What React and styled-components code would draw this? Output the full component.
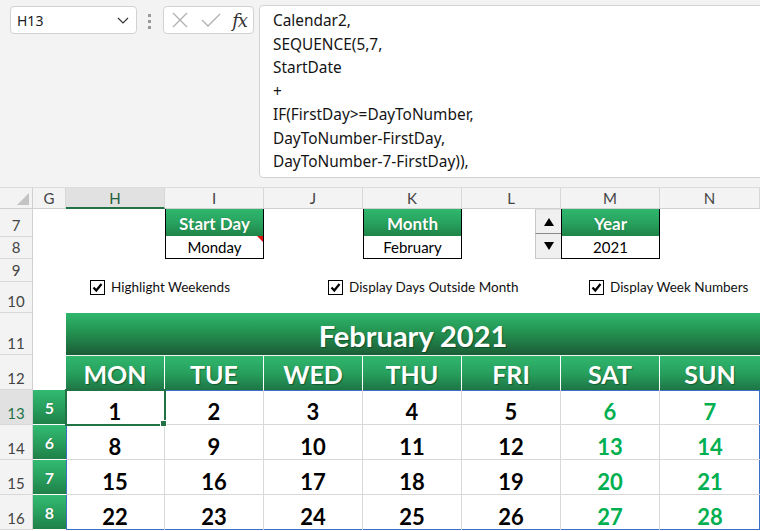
import styled, { createGlobalStyle } from 'styled-components'

const GlobalStyle = createGlobalStyle`
  html, body {
    margin: 0;
    padding: 0;
    background: #fff;
  }
  body {
    font-family: Lato, "Liberation Sans", sans-serif;
    overflow: hidden;
  }
`

const COLS = ['G', 'H', 'I', 'J', 'K', 'L', 'M', 'N']
const ROWS = [7, 8, 9, 10, 11, 12, 13, 14, 15, 16]
const DAYS = ['MON', 'TUE', 'WED', 'THU', 'FRI', 'SAT', 'SUN']
const WEEKS = [5, 6, 7, 8]
const FORMULA = [
  'Calendar2,',
  'SEQUENCE(5,7,',
  'StartDate',
  '+',
  'IF(FirstDay>=DayToNumber,',
  'DayToNumber-FirstDay,',
  'DayToNumber-7-FirstDay)),',
]

const App = () => {
  return (
    <>
      <GlobalStyle />
      <Bar>
        <NameBox>
          H13
          <svg width='14' height='14' viewBox='0 0 14 14'>
            <path d='M2 5 L7 10 L12 5' fill='none' stroke='#333' strokeWidth='1.2' />
          </svg>
        </NameBox>
        <Dots>
          <Dot />
          <Dot />
          <Dot />
        </Dots>
        <FuncBox>
          <svg width='18' height='18' viewBox='0 0 18 18'>
            <path d='M2 2 L16 16 M16 2 L2 16' stroke='#b0b0b0' strokeWidth='1.3' />
          </svg>
          <svg width='20' height='18' viewBox='0 0 20 18'>
            <path d='M1 9 L7 15 L19 3' fill='none' stroke='#b0b0b0' strokeWidth='1.3' />
          </svg>
          <Fx>fx</Fx>
        </FuncBox>
        <Formula>
          {FORMULA.map((line) => (
            <FormulaLine key={line}>{line}</FormulaLine>
          ))}
        </Formula>
      </Bar>

      <Sheet>
        <Corner>
          <svg width='12' height='12' viewBox='0 0 12 12'>
            <polygon points='12,0 12,12 0,12' fill='#c4c4c4' />
          </svg>
        </Corner>
        {COLS.map((c) => (
          <ColHeader key={c} $selected={c === 'H'}>
            {c}
          </ColHeader>
        ))}
        {ROWS.map((r, i) => (
          <RowHeader key={r} $row={i + 2} $selected={r === 13}>
            {r}
          </RowHeader>
        ))}

        <Control $col={4}>
          <ControlHead>Start Day</ControlHead>
          <ControlValue $note>Monday</ControlValue>
        </Control>
        <Control $col={6}>
          <ControlHead>Month</ControlHead>
          <ControlValue>February</ControlValue>
        </Control>
        <Spinner>
          <SpinButton>
            <svg width='10' height='8' viewBox='0 0 10 8'>
              <polygon points='5,0 10,8 0,8' fill='#000' />
            </svg>
          </SpinButton>
          <SpinButton $down>
            <svg width='10' height='8' viewBox='0 0 10 8'>
              <polygon points='0,0 10,0 5,8' fill='#000' />
            </svg>
          </SpinButton>
        </Spinner>
        <Control $col={8}>
          <ControlHead>Year</ControlHead>
          <ControlValue>2021</ControlValue>
        </Control>

        <CheckItem $col={3} $offset={24}>
          <CheckBox>
            <CheckMark />
          </CheckBox>
          Highlight Weekends
        </CheckItem>
        <CheckItem $col={5} $offset={64}>
          <CheckBox>
            <CheckMark />
          </CheckBox>
          Display Days Outside Month
        </CheckItem>
        <CheckItem $col={8} $offset={28}>
          <CheckBox>
            <CheckMark />
          </CheckBox>
          Display Week Numbers
        </CheckItem>

        <Title>February 2021</Title>
        {DAYS.map((d, i) => (
          <DayHeader key={d} $col={i + 3} $last={i === 6}>
            {d}
          </DayHeader>
        ))}
        {WEEKS.map((w, i) => (
          <WeekCell key={w} $row={i + 8}>
            {w}
          </WeekCell>
        ))}
        <DateGrid>
          {WEEKS.map((w, wi) =>
            DAYS.map((d, di) => (
              <DateCell
                key={`${w}-${d}`}
                $weekend={di >= 5}
                $lastCol={di === 6}
                $lastRow={wi === 3}
                $selected={wi === 0 && di === 0}
              >
                {1 + wi * 7 + di}
              </DateCell>
            ))
          )}
        </DateGrid>
      </Sheet>
    </>
  )
}

const CheckMark = () => (
  <svg width='11' height='11' viewBox='0 0 11 11'>
    <path d='M1.5 5.5 L4.3 8.5 L9.5 2' fill='none' stroke='#000' strokeWidth='2.2' />
  </svg>
)

/* formula bar */

const Bar = styled.div`
  height: 187px;
  box-sizing: border-box;
  background: #f3f3f3;
  display: flex;
  align-items: flex-start;
  padding: 5px 0 0 10px;
  font-family: "Noto Sans", "Open Sans", sans-serif;
`

const NameBox = styled.div`
  margin-top: 1px;
  width: 127px;
  height: 28px;
  box-sizing: border-box;
  border: 1px solid #d2d2d2;
  border-radius: 4px;
  background: #fff;
  display: flex;
  align-items: center;
  justify-content: space-between;
  padding: 0 6px;
  font-size: 14px;
  color: #1e1e1e;
`

const Dots = styled.div`
  width: 4px;
  margin: 9px 11px 0;
  display: flex;
  flex-direction: column;
  gap: 3px;
`

const Dot = styled.span`
  width: 3px;
  height: 3px;
  background: #9a9a9a;
`

const FuncBox = styled.div`
  margin-top: 1px;
  width: 91px;
  height: 28px;
  box-sizing: border-box;
  border: 1px solid #d2d2d2;
  border-radius: 4px;
  background: #fff;
  display: flex;
  align-items: center;
  justify-content: space-between;
  padding: 0 6px 0 7px;
`

const Fx = styled.span`
  font-family: "DejaVu Serif", "Liberation Serif", serif;
  font-style: italic;
  font-size: 18px;
  color: #333;
  letter-spacing: -1px;
`

const Formula = styled.div`
  margin-left: 5px;
  flex: 1;
  margin-right: -4px;
  height: 173px;
  box-sizing: border-box;
  border: 1px solid #d2d2d2;
  border-radius: 4px;
  background: #fff;
  padding: 3px 13px;
  font-size: 15.4px;
  line-height: 23.5px;
  color: #141414;
`

const FormulaLine = styled.div`
  white-space: nowrap;
`

/* sheet */

const Sheet = styled.div`
  display: grid;
  grid-template-columns: 33px 33px repeat(6, 99px) 100px;
  grid-template-rows: 22px 28px 22px 23px 31px 42px 35px repeat(4, 35px);
  background: #fff;
`

const Corner = styled.div`
  grid-column: 1;
  grid-row: 1;
  background: #f3f3f3;
  border-right: 1px solid #d0d0d0;
  border-bottom: 1px solid #d0d0d0;
  border-top: 1px solid #dcdcdc;
  display: flex;
  align-items: flex-end;
  justify-content: flex-end;
  padding: 0 3px 3px 0;
`

const ColHeader = styled.div`
  grid-row: 1;
  background: ${(p) => (p.$selected ? '#e1e1e1' : '#f3f3f3')};
  border-top: 1px solid #dcdcdc;
  border-right: 1px solid #d8d8d8;
  border-bottom: ${(p) => (p.$selected ? '2px solid #217346' : '1px solid #d0d0d0')};
  color: ${(p) => (p.$selected ? '#1f5e3a' : '#444')};
  font-size: 15px;
  display: flex;
  align-items: center;
  justify-content: center;
`

const RowHeader = styled.div`
  grid-column: 1;
  grid-row: ${(p) => p.$row};
  background: ${(p) => (p.$selected ? '#e1e1e1' : '#f3f3f3')};
  border-right: 1px solid #d0d0d0;
  border-bottom: 1px solid #d8d8d8;
  color: ${(p) => (p.$selected ? '#217346' : '#444')};
  font-size: 15px;
  display: flex;
  align-items: flex-end;
  justify-content: center;
  padding-bottom: 2px;
  box-sizing: border-box;
`

const Control = styled.div`
  grid-column: ${(p) => p.$col};
  grid-row: 2 / span 2;
  display: grid;
  grid-template-rows: 27px 1fr;
  border: 1px solid #000;
  border-top: 0;
`

const ControlHead = styled.div`
  background: linear-gradient(180deg, #30b76e 0%, #28a35f 50%, #1f8447 100%);
  color: #fff;
  font-weight: 700;
  font-size: 17px;
  display: flex;
  align-items: center;
  justify-content: center;
  padding-top: 1px;
  text-shadow: 0 0 1px rgba(0, 60, 20, 0.5);
`

const ControlValue = styled.div`
  position: relative;
  color: #000;
  font-size: 15px;
  display: flex;
  align-items: center;
  justify-content: center;

  &::after {
    content: '';
    display: ${(p) => (p.$note ? 'block' : 'none')};
    position: absolute;
    top: 0;
    right: 0;
    border-top: 6px solid #e01010;
    border-left: 6px solid transparent;
  }
`

const Spinner = styled.div`
  grid-column: 7;
  grid-row: 2 / span 2;
  justify-self: end;
  width: 26px;
  display: grid;
  grid-template-rows: 24px 1fr;
`

const SpinButton = styled.div`
  background: #f0f0f0;
  border-left: 1px solid #c8c8c8;
  border-top: 1px solid ${(p) => (p.$down ? '#8a8a8a' : '#e0e0e0')};
  border-bottom: ${(p) => (p.$down ? '1px solid #c8c8c8' : '0')};
  display: flex;
  align-items: center;
  justify-content: center;
`

const CheckItem = styled.div`
  grid-column: ${(p) => p.$col};
  grid-row: 4 / span 2;
  align-self: start;
  justify-self: start;
  margin: 20px 0 0 ${(p) => p.$offset}px;
  display: flex;
  align-items: center;
  gap: 6px;
  white-space: nowrap;
  font-size: 13.5px;
  color: #111;
`

const CheckBox = styled.span`
  width: 13px;
  height: 13px;
  border: 1px solid #000;
  background: #fff;
  display: flex;
  align-items: center;
  justify-content: center;
`

const Title = styled.div`
  grid-column: 3 / span 7;
  grid-row: 6;
  background: linear-gradient(180deg, #2fb66d 0%, #259754 40%, #1a5d36 100%);
  color: #fff;
  font-weight: 700;
  font-size: 29px;
  display: flex;
  align-items: center;
  justify-content: center;
  padding-top: 2px;
  text-shadow: 1px 1px 1px rgba(0, 40, 10, 0.45);
`

const DayHeader = styled.div`
  grid-column: ${(p) => p.$col};
  grid-row: 7;
  background: linear-gradient(180deg, #30b76e 0%, #27a05d 50%, #1e7544 100%);
  border-top: 1px solid #f2f2f2;
  border-right: ${(p) => (p.$last ? '0' : '1px solid #fff')};
  color: #fff;
  font-weight: 700;
  font-size: 25px;
  display: flex;
  align-items: center;
  justify-content: center;
  padding-top: 2px;
  text-shadow: 1px 1px 1px rgba(0, 40, 10, 0.45);
`

const WeekCell = styled.div`
  grid-column: 2;
  grid-row: ${(p) => p.$row};
  background: linear-gradient(180deg, #33ba71 0%, #28a05e 50%, #1f8048 100%);
  border-bottom: 1px solid #fff;
  color: #fff;
  font-weight: 700;
  font-size: 16px;
  display: flex;
  align-items: center;
  justify-content: center;
  text-shadow: 0 0 1px rgba(0, 40, 10, 0.5);
`

const DateGrid = styled.div`
  grid-column: 3 / span 7;
  grid-row: 8 / span 4;
  display: grid;
  grid-template-columns: repeat(6, 99px) 100px;
  grid-template-rows: repeat(4, 35px);
  outline: 1px solid #3e6fc7;
  outline-offset: -1px;
`

const DateCell = styled.div`
  position: relative;
  box-sizing: border-box;
  border-right: ${(p) => (p.$lastCol ? '0' : '1px solid #d8d8d8')};
  border-bottom: ${(p) => (p.$lastRow ? '0' : '1px solid #d8d8d8')};
  color: ${(p) => (p.$weekend ? '#00b050' : '#000')};
  font-weight: 700;
  font-size: 22px;
  display: flex;
  align-items: center;
  justify-content: center;
  padding-top: 8px;
  outline: ${(p) => (p.$selected ? '2px solid #217346' : 'none')};
  outline-offset: -1px;

  &::after {
    content: '';
    display: ${(p) => (p.$selected ? 'block' : 'none')};
    position: absolute;
    z-index: 2;
    right: -3px;
    bottom: -3px;
    width: 5px;
    height: 5px;
    background: #217346;
    border: 1px solid #fff;
  }
`

export default App
